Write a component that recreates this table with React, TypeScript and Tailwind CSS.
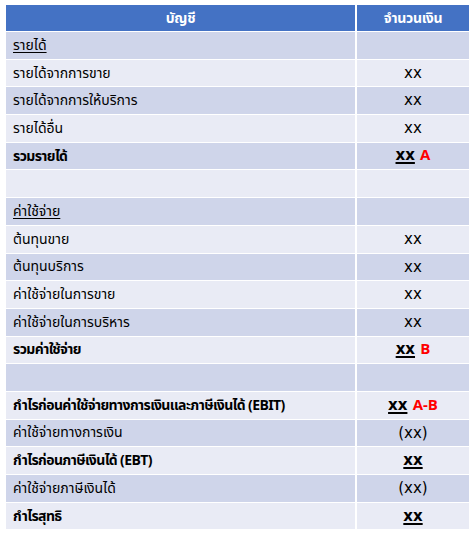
import React from "react";

type Row = {
  label?: string;
  amount?: React.ReactNode;
  bold?: boolean;
  underline?: boolean;
};

const U = ({ children }: { children: React.ReactNode }) => (
  <span className="underline underline-offset-2 decoration-[1.5px]">{children}</span>
);

const Red = ({ children }: { children: React.ReactNode }) => (
  <span className="text-[#ff0000] font-bold" style={{ fontFamily: '"Noto Sans Thai", "Noto Sans", sans-serif' }}>
    {children}
  </span>
);

const rows: Row[] = [
  { label: "รายได้", underline: true },
  { label: "รายได้จากการขาย", amount: "xx" },
  { label: "รายได้จากการให้บริการ", amount: "xx" },
  { label: "รายได้อื่น", amount: "xx" },
  {
    label: "รวมรายได้",
    bold: true,
    amount: (
      <span className="font-bold">
        <U>xx</U> <Red>A</Red>
      </span>
    ),
  },
  {},
  { label: "ค่าใช้จ่าย", underline: true },
  { label: "ต้นทุนขาย", amount: "xx" },
  { label: "ต้นทุนบริการ", amount: "xx" },
  { label: "ค่าใช้จ่ายในการขาย", amount: "xx" },
  { label: "ค่าใช้จ่ายในการบริหาร", amount: "xx" },
  {
    label: "รวมค่าใช้จ่าย",
    bold: true,
    amount: (
      <span className="font-bold">
        <U>xx</U> <Red>B</Red>
      </span>
    ),
  },
  {},
  {
    label: "กำไรก่อนค่าใช้จ่ายทางการเงินและภาษีเงินได้ (EBIT)",
    bold: true,
    amount: (
      <span className="font-bold">
        <U>xx</U> <Red>A-B</Red>
      </span>
    ),
  },
  { label: "ค่าใช้จ่ายทางการเงิน", amount: "(xx)" },
  {
    label: "กำไรก่อนภาษีเงินได้ (EBT)",
    bold: true,
    amount: (
      <span className="font-bold">
        <U>xx</U>
      </span>
    ),
  },
  { label: "ค่าใช้จ่ายภาษีเงินได้", amount: "(xx)" },
  {
    label: "กำไรสุทธิ",
    bold: true,
    amount: (
      <span className="font-bold">
        <U>xx</U>
      </span>
    ),
  },
];

export default function App() {
  return (
    <div
      className="w-[474px] h-[539px] bg-white pt-[5px] pl-[6px]"
      style={{ fontFamily: '"Noto Sans Thai", "Noto Sans Thai Looped", "Noto Sans", "DejaVu Sans", sans-serif' }}
    >
      <div className="grid grid-cols-[349px_112px] gap-x-[2px] gap-y-[1px] text-[14px] text-black">
        <div className="h-[26px] bg-[#4472c4] text-white font-bold flex items-center justify-center tracking-[-0.3px]">
          บัญชี
        </div>
        <div className="h-[26px] bg-[#4472c4] text-white font-bold flex items-center justify-center tracking-[-0.3px]">
          จำนวนเงิน
        </div>
        {rows.map((r, i) => {
          const bg = i % 2 === 0 ? "bg-[#cfd5ea]" : "bg-[#e9ebf5]";
          return (
            <React.Fragment key={i}>
              <div className={`h-[26.7px] ${bg} flex items-center pl-[7px] whitespace-nowrap`}>
                <span
                  className={`${r.bold ? "font-bold tracking-[-0.6px]" : ""} ${
                    r.underline ? "underline underline-offset-2" : ""
                  }`}
                >
                  {r.label}
                </span>
              </div>
              <div
                className={`h-[26.7px] ${bg} flex items-center justify-center text-[15px]`}
                style={{ fontFamily: '"DejaVu Sans", sans-serif' }}
              >
                {r.amount}
              </div>
            </React.Fragment>
          );
        })}
      </div>
    </div>
  );
}
